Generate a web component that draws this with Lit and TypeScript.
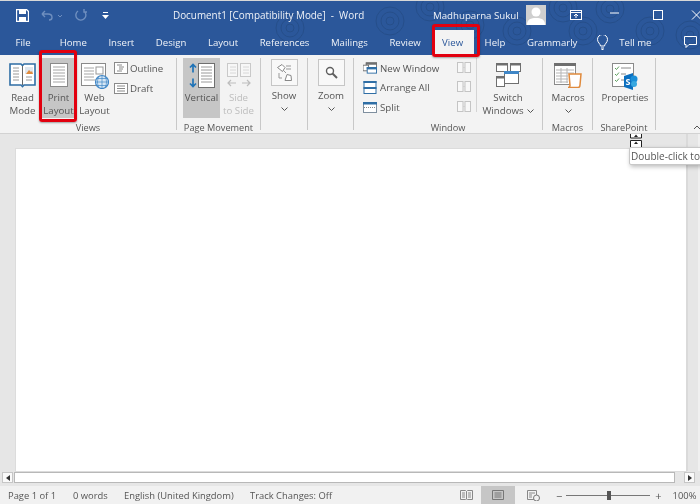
import { LitElement, html, css, svg } from 'lit'
import { customElement } from 'lit/decorators.js'

const chevron = html`<svg class="chev" width="7" height="4" viewBox="0 0 7 4"><path d="M.5.5l3 3 3-3" fill="none" stroke="#555"/></svg>`

const swirl = (x: number, y: number) => svg`
  <g fill="none" stroke="#23497f" stroke-width="1" opacity=".6">
    <circle cx=${x} cy=${y} r="4"/><circle cx=${x} cy=${y} r="9"/><circle cx=${x} cy=${y} r="14"/>
  </g>`

const icons = {
  read: html`<svg width="27" height="25" viewBox="0 0 27 25">
    <path d="M1 1h11l1.500 1.500L15 1h11v21H15l-1.500 1.500L12 22H1z" fill="#fff" stroke="#2f6ea5" stroke-width="1.600"/>
    <path d="M13.500 3v19" stroke="#666"/>
    <path d="M4 5h6M4 8h6M4 11h6M4 14h6M4 17h6M17 14h6M17 17h6" stroke="#9a9a9a"/>
    <rect x="16" y="4" width="8" height="7" fill="#dfe7ef"/><path d="M17 11l3-4 2 2 1-1 1 3z" fill="#e08a3c"/>
  </svg>`,
  print: html`<svg width="18" height="24" viewBox="0 0 18 24">
    <rect x=".5" y=".5" width="17" height="23" fill="#fff" stroke="#8a8a8a"/>
    <path d="M3 4h12M3 7h12M3 10h12M3 13h12M3 16h12M3 19h12" stroke="#a5a5a5"/>
  </svg>`,
  web: html`<svg width="28" height="26" viewBox="0 0 28 26">
    <rect x=".5" y=".5" width="24" height="22" fill="#fff" stroke="#8a8a8a"/>
    <path d="M3 5h10M3 8h10M3 11h10M3 14h10M3 17h14" stroke="#a5a5a5"/>
    <rect x="15" y="4" width="7" height="7" fill="#fff" stroke="#999"/>
    <circle cx="21" cy="19" r="6.500" fill="#d6e6f5" stroke="#3f86c6" stroke-width="1.200"/>
    <path d="M14.500 19h13M21 12.500v13M16 15.500h10M16 22.500h10M18 13.500c-2 3-2 8 0 11M24 13.500c2 3 2 8 0 11" stroke="#3f86c6" stroke-width=".7" fill="none"/>
  </svg>`,
  outline: html`<svg width="14" height="12" viewBox="0 0 14 12">
    <rect x=".5" y=".5" width="13" height="11" fill="#fff" stroke="#8a8a8a"/>
    <path d="M3 3h5M5 5h5M5 7h4M3 9h5" stroke="#8a8a8a"/>
  </svg>`,
  draft: html`<svg width="14" height="11" viewBox="0 0 14 11">
    <rect x=".5" y=".5" width="13" height="10" fill="#fff" stroke="#8a8a8a"/>
    <path d="M3 3h8M3 5.500h8M3 8h8" stroke="#8a8a8a"/>
  </svg>`,
  vertical: html`<svg width="26" height="25" viewBox="0 0 26 25">
    <path d="M4 1.500v8M1 4.500l3-3 3 3M4 15.500v8M1 20.500l3 3 3-3" fill="none" stroke="#1f73b7" stroke-width="1.700"/>
    <rect x="9.500" y=".5" width="16" height="24" fill="#fff" stroke="#6f6f6f"/>
    <path d="M12 4h11M12 7h11M12 10h11M12 13h11M12 16h11M12 19h11" stroke="#9a9a9a"/>
  </svg>`,
  side: html`<svg width="24" height="26" viewBox="0 0 24 26">
    <rect x=".5" y=".5" width="10" height="13" fill="#f7f7f7" stroke="#c9c9c9"/>
    <rect x="13.500" y=".5" width="10" height="13" fill="#f7f7f7" stroke="#c9c9c9"/>
    <path d="M3 4h6M3 7h6M3 10h6M16 4h6M16 7h6M16 10h6" stroke="#d8d8d8"/>
    <path d="M1 20h8M4 17l-3 3 3 3M15 20h8M20 17l3 3-3 3" fill="none" stroke="#bdbdbd" stroke-width="1.200"/>
  </svg>`,
  show: html`<svg width="15" height="17" viewBox="0 0 15 17">
    <path d="M.5 3.500L5 .5l3 3-2.500 4z" fill="#fff" stroke="#888"/>
    <path d="M9 2h5M9 5h5" stroke="#999"/>
    <path d="M2 9v5h3M6 6l3 3" stroke="#999" fill="none"/>
    <path d="M8 16.500l2-6 4 1 .5 5z" fill="#fff" stroke="#888"/>
  </svg>`,
  zoom: html`<svg width="13" height="13" viewBox="0 0 13 13">
    <circle cx="5" cy="5" r="3.500" fill="#fff" stroke="#5f5f5f" stroke-width="1.400"/>
    <path d="M7.500 7.500L12 12" stroke="#5f5f5f" stroke-width="2"/>
  </svg>`,
  newWin: html`<svg width="15" height="12" viewBox="0 0 15 12">
    <rect x="3.500" y=".5" width="11" height="7" fill="#fff" stroke="#6f6f6f"/><rect x="3" y="0" width="12" height="2.500" fill="#6f6f6f"/>
    <rect x="0" y="3" width="6" height="6" fill="#fff" stroke="#6f6f6f"/>
    <rect x="4.500" y="5.500" width="10" height="6" fill="#fff" stroke="#2f6ea5"/><rect x="4" y="5" width="11" height="2.500" fill="#2f6ea5"/>
  </svg>`,
  arrange: html`<svg width="13" height="13" viewBox="0 0 13 13">
    <rect x=".5" y=".5" width="12" height="12" fill="#fff" stroke="#2f6ea5"/>
    <rect x="0" y="0" width="13" height="2" fill="#2f6ea5"/><rect x="0" y="6" width="13" height="2" fill="#2f6ea5"/>
  </svg>`,
  split: html`<svg width="14" height="11" viewBox="0 0 14 11">
    <rect x=".5" y=".5" width="13" height="10" fill="#fff" stroke="#7f8f9f"/>
    <rect x="0" y="0" width="14" height="2.500" fill="#2f6ea5"/>
    <path d="M1 5.500h12" stroke="#888" stroke-dasharray="1 1"/>
  </svg>`,
  mini: html`<svg width="14" height="11" viewBox="0 0 14 11">
    <rect x=".5" y=".5" width="5.500" height="10" fill="#f8f8f8" stroke="#c4c4c4"/>
    <rect x="8" y=".5" width="5.500" height="10" fill="#f8f8f8" stroke="#c4c4c4"/>
    <path d="M6.500 5.500h1" stroke="#c4c4c4"/>
  </svg>`,
  switchWin: html`<svg width="25" height="24" viewBox="0 0 25 24">
    <rect x=".5" y=".5" width="11" height="8" fill="#fff" stroke="#6f6f6f"/><rect x="0" y="0" width="12" height="2.500" fill="#6f6f6f"/>
    <rect x="14.500" y=".5" width="10" height="8" fill="#fff" stroke="#6f6f6f"/><rect x="14" y="0" width="11" height="2.500" fill="#6f6f6f"/>
    <rect x=".5" y="13.500" width="8" height="10" fill="#fff" stroke="#6f6f6f"/><rect x="0" y="13" width="9" height="2.500" fill="#6f6f6f"/>
    <rect x="8.500" y="8.500" width="14" height="12" fill="#fff" stroke="#6f6f6f"/><rect x="8" y="8" width="15" height="3" fill="#3f86c6"/>
  </svg>`,
  macros: html`<svg width="28" height="25" viewBox="0 0 28 25">
    <rect x=".5" y=".5" width="21" height="21" fill="#fff" stroke="#8a8a8a"/>
    <rect x="0" y="0" width="22" height="3" fill="#6f6f6f"/>
    <path d="M2 7h18M2 10h18M2 13h12M2 16h12M2 19h12M7 5v15M13 5v15" stroke="#b5b5b5"/>
    <path d="M15 11h12l-1 11c0 2-1 2.500-2 2.500H14c1.500 0 2-1 2-2z" fill="#fff" stroke="#e08a3c" stroke-width="1.500"/>
  </svg>`,
  props: html`<svg width="26" height="27" viewBox="0 0 26 27">
    <rect x=".5" y=".5" width="21" height="23" fill="#fff" stroke="#8a8a8a"/>
    <path d="M3 5l1.500 1.500L7 3.500M3 11l1.500 1.500L7 9.500M3 17l1.500 1.500L7 15.500" fill="none" stroke="#5f9f5f"/>
    <path d="M9 5h10M9 11h5M9 17h3" stroke="#8a8a8a"/>
    <path d="M12 13l9-3v17l-9-3z" fill="#0b6fbf"/><circle cx="22" cy="16" r="3.500" fill="#1b8fd8"/><circle cx="22" cy="21" r="3" fill="#38a8e0"/>
    <text x="13.500" y="22" font-size="9" font-weight="700" fill="#fff" font-family="Open Sans, sans-serif">S</text>
  </svg>`,
}

@customElement('app-root')
export class AppRoot extends LitElement {
  static styles = css`
    :host {
      display: block;
      width: 700px;
      height: 504px;
      font-family: 'Open Sans', 'Noto Sans', sans-serif;
      font-size: 9.7px;
      color: #444;
    }

    .win {
      position: relative;
      width: 700px;
      height: 504px;
      overflow: hidden;
      display: flex;
      flex-direction: column;
      background: #e6e6e6;
      filter: blur(0.35px);
    }

    /* blue header */
    .head {
      position: relative;
      height: 55px;
      flex: none;
      background: #2b579a;
      border-top: 1px solid #d8d8d8;
      box-sizing: border-box;
      color: #f0f3f8;
    }
    .swirls {
      position: absolute;
      inset: 0;
    }
    .titlebar {
      position: relative;
      height: 28px;
      display: flex;
      align-items: center;
    }
    .qat {
      display: flex;
      align-items: center;
      flex: none;
      padding-left: 16px;
      width: 173px;
      box-sizing: border-box;
      gap: 12px;
    }
    .caret { margin-left: 3px; }
    .doc-title {
      width: 260px;
      flex: none;
      font-size: 9.9px;
      white-space: pre;
    }
    .user {
      width: 93px;
      flex: none;
      font-size: 9.7px;
      white-space: nowrap;
    }
    .avatar {
      width: 20px;
      height: 20px;
      background: #c9c9c9;
      flex: none;
      margin-right: 24px;
    }
    .ctrl {
      width: 12px;
      flex: none;
    }
    .ctrl.restore { margin-right: 27px; }
    .ctrl.min { margin-right: 31px; }
    .ctrl.max { margin-right: 27px; }
    .tabs {
      position: relative;
      height: 26px;
      display: flex;
      align-items: center;
      padding-left: 4.7px;
      font-size: 9.6px;
    }
    .tab {
      padding: 0 10.8px;
      white-space: nowrap;
      height: 25px;
      margin-top: 1px;
      display: flex;
      align-items: center;
    }
    .tab.file { margin-right: 7.4px; }
    .tab.on {
      background: #f3f3f3;
      color: #2b579a;
      width: 42px;
      padding: 0;
      margin: 1px 0 0 0;
      justify-content: center;
    }
    .tab.help { padding-left: 11px; }
    .tab.tell { padding-left: 0; margin-left: 9px; gap: 11px; }
    .comment { margin-left: 22px; flex: none; }

    /* ribbon */
    .ribbon {
      height: 79px;
      flex: none;
      display: flex;
      background: #f3f3f3;
      border-bottom: 1px solid #d2d2d2;
      box-sizing: border-box;
      position: relative;
    }
    .group {
      position: relative;
      display: flex;
      flex-direction: column;
      flex: none;
      box-sizing: border-box;
      margin-top: 3px;
      height: 72px;
      border-right: 1px solid #c8c8c8;
    }
    .g-views { width: 177px; }
    .g-move { width: 84px; }
    .g-show { width: 47px; }
    .g-zoom { width: 46px; }
    .g-window { width: 189px; }
    .g-macros { width: 50px; }
    .g-share { width: 63px; }
    .tools {
      height: 60px;
      flex: none;
      display: flex;
      justify-content: flex-start;
    }
    .glabel {
      text-align: center;
      font-size: 9.2px;
      line-height: 13px;
      margin-top: 3px;
      color: #555;
      white-space: nowrap;
    }
    .big {
      display: flex;
      flex-direction: column;
      align-items: center;
      box-sizing: border-box;
      flex: none;
      line-height: 13px;
      text-align: center;
      white-space: nowrap;
      color: #555;
    }
    .big .pic {
      height: 28px;
      margin-top: 5px;
      display: flex;
      align-items: flex-start;
      justify-content: center;
    }
    .big span { display: block; }
    .on-grey { background: #c6c6c6; }
    .off { color: #bdbdbd; }
    .w-read { width: 33px; margin-left: 6px; }
    .w-print { width: 35px; margin-left: 2px; }
    .w-web { width: 33px; margin-left: 2px; }
    .w-vert { width: 37px; margin-left: 6px; }
    .w-side { width: 35px; margin-left: 1px; }
    .w-switch { width: 58px; margin-left: 2px; }
    .w-macros { width: 38px; margin-left: 6px; }
    .w-props { width: 50px; margin-left: 7px; }
    .stack {
      display: flex;
      flex-direction: column;
      margin-left: 3px;
      padding-top: 4px;
      gap: 8px;
    }
    .line {
      display: flex;
      align-items: center;
      gap: 2px;
      height: 12px;
      white-space: nowrap;
      color: #555;
    }
    .line svg {
      flex: none;
    }
    .stack.win-list {
      margin-left: 9px;
      width: 94px;
      flex: none;
      gap: 7.5px;
    }
    .win-list .line {
      gap: 3px;
    }
    .win-list .line svg {
      width: 14px;
    }
    .stack.mini-list {
      margin: 0;
      gap: 8px;
      width: 19px;
      flex: none;
      border-right: 1px solid #d4d4d4;
      height: 50px;
    }
    .menu {
      display: flex;
      flex-direction: column;
      align-items: center;
      flex: none;
      width: 46px;
      line-height: 13px;
      color: #555;
    }
    .square {
      width: 27px;
      height: 27px;
      box-sizing: border-box;
      border: 1px solid #c6c6c6;
      background: #f8f8f8;
      display: flex;
      align-items: center;
      justify-content: center;
      margin: 1px 0 3px;
    }
    .chev { display: block; margin: 5px auto 0; }
    .inline-chev { display: inline-block; margin: 0 0 1px 3px; }
    .collapse {
      position: absolute;
      right: 0;
      bottom: 3px;
    }

    /* document area */
    .body {
      flex: 1;
      display: flex;
      position: relative;
      min-height: 0;
    }
    .canvas {
      flex: 1;
      padding: 15px 0 0 16px;
    }
    .page {
      height: 100%;
      background: #fff;
      box-shadow: 0 0 0 1px #dcdcdc;
    }
    .vscroll {
      width: 14px;
      flex: none;
      background: #e6e6e6;
      border-left: 2px solid #dadada;
      border-right: 2px solid #f0f0f0;
      box-sizing: border-box;
    }
    .hscroll {
      height: 15px;
      flex: none;
      display: flex;
      align-items: flex-start;
      background: #e6e6e6;
      padding: 1px 0 0 2px;
      box-sizing: border-box;
    }
    .arrow {
      width: 11px;
      height: 11px;
      flex: none;
      box-sizing: border-box;
      background: #fafafa;
      border: 1px solid #c6c6c6;
      display: flex;
      align-items: center;
      justify-content: center;
    }
    .thumb {
      width: 661px;
      height: 11px;
      flex: none;
      margin: 0 9px 0 1px;
      box-sizing: border-box;
      background: #fff;
      border: 1px solid #b8b8b8;
    }

    /* status bar */
    .status {
      height: 18px;
      flex: none;
      display: flex;
      align-items: center;
      background: #f1f1f1;
      font-size: 9.4px;
      color: #555;
      white-space: nowrap;
    }
    .st { flex: none; }
    .st-page { width: 65px; margin-left: 8px; }
    .st-words { width: 51px; }
    .st-lang { width: 126px; }
    .st-track { width: 207px; }
    .view-btn {
      width: 34px;
      height: 18px;
      flex: none;
      display: flex;
      align-items: center;
      justify-content: center;
    }
    .view-btn.first { margin-left: -6px; width: 30px; }
    .view-btn.last { width: 37px; }
    .slider {
      display: flex;
      align-items: center;
      flex: none;
      margin-left: 4px;
      color: #555;
      font-size: 11px;
    }
    .track {
      position: relative;
      width: 84px;
      height: 1px;
      background: #777;
      margin: 0 5px 0 4px;
    }
    .knob {
      position: absolute;
      left: 41px;
      top: -4px;
      width: 4px;
      height: 9px;
      background: #555;
    }
    .pct { margin-left: 11px; }

    /* things lying over the page */
    .mark {
      position: absolute;
      box-sizing: border-box;
      border: 3px solid #e2000f;
      border-radius: 3px;
      box-shadow: 0 1px 2px rgba(0, 0, 0, 0.35);
    }
    .mark.print { left: 39px; top: 50px; width: 38px; height: 72px; }
    .mark.view { left: 432px; top: 24px; width: 48px; height: 33px; }
    .ruler-btn {
      position: absolute;
      left: 630px;
      top: 134px;
      width: 12px;
      height: 13px;
    }
    .tip {
      position: absolute;
      left: 629px;
      top: 147px;
      width: 90px;
      height: 18px;
      box-sizing: border-box;
      padding-left: 1px;
      background: #fff;
      border: 1px solid #c8c8c8;
      border-radius: 2px;
      box-shadow: 1px 2px 4px rgba(0, 0, 0, 0.25);
      font-size: 10px;
      line-height: 16px;
      color: #555;
      white-space: nowrap;
    }
  `

  render() {
    return html`
      <div class="win">
        <div class="head">
          <svg class="swirls" width="700" height="54" viewBox="0 0 700 54">
            ${[[290, 27], [390, 20], [517, 30], [563, 7], [583, 30], [650, 30], [430, 6], [470, 24], [610, 8], [690, 34]].map(([x, y]) => swirl(x, y))}
          </svg>
          <div class="titlebar">
            <div class="qat">
              <svg width="13" height="13" viewBox="0 0 13 13"><path d="M.5.5h10l2 2v10H.5z" fill="none" stroke="#fff" stroke-width="1.300"/><path d="M3 1h7v4H3zM3 8h7v4.500H3z" fill="#fff"/></svg>
              <svg width="22" height="11" viewBox="0 0 22 11"><path d="M1 4h6c3 0 4 2 4 3.500S10 10 8 10M1 4l3-3M1 4l3 3" fill="none" stroke="#6f8fbf" stroke-width="1.400"/><path d="M17 5l2 2 2-2" fill="none" stroke="#6f8fbf"/></svg>
              <svg width="12" height="12" viewBox="0 0 12 12"><path d="M3 2a5 5 0 1 0 6 .2M9 0v3h3" fill="none" stroke="#6f8fbf" stroke-width="1.400"/></svg>
              <svg class="caret" width="7" height="8" viewBox="0 0 7 8"><path d="M1 1h5v1H1zM0 4h7L3.500 8z" fill="#fff"/></svg>
            </div>
            <div class="doc-title">Document1 [Compatibility Mode]  -  Word</div>
            <div class="user">Madhuparna Sukul</div>
            <svg class="avatar" viewBox="0 0 20 20"><rect width="20" height="20" fill="#cfcfcf"/><circle cx="10" cy="7" r="4.500" fill="#fff"/><path d="M1 20c0-6 4-7 9-7s9 1 9 7z" fill="#fff"/></svg>
            <svg class="ctrl restore" height="10" viewBox="0 0 12 10"><rect x=".5" y=".5" width="11" height="9" fill="none" stroke="#fff"/><path d="M1 2.500h10" stroke="#fff"/><path d="M6 8V4M4 6l2-2 2 2" stroke="#fff" fill="none"/></svg>
            <svg class="ctrl min" height="10" viewBox="0 0 12 10"><path d="M1 3h9" stroke="#fff"/></svg>
            <svg class="ctrl max" height="10" viewBox="0 0 12 10"><rect x="1.500" y=".5" width="9" height="9" fill="none" stroke="#fff"/></svg>
            <svg class="ctrl" height="10" viewBox="0 0 12 10"><path d="M1 .5l9 9M10 .5l-9 9" stroke="#fff"/></svg>
          </div>
          <div class="tabs">
            <div class="tab file">File</div>
            <div class="tab">Home</div>
            <div class="tab">Insert</div>
            <div class="tab">Design</div>
            <div class="tab">Layout</div>
            <div class="tab">References</div>
            <div class="tab">Mailings</div>
            <div class="tab">Review</div>
            <div class="tab on">View</div>
            <div class="tab help">Help</div>
            <div class="tab">Grammarly</div>
            <div class="tab tell">
              <svg width="11" height="15" viewBox="0 0 11 15"><path d="M3.500 11c0-2-3-3.500-3-6.500a5 5 0 0 1 10 0c0 3-3 4.500-3 6.500zM4 13h3M4.500 14.500h2" fill="none" stroke="#fff"/></svg>
              <span>Tell me</span>
            </div>
            <svg class="comment" width="13" height="13" viewBox="0 0 13 13"><path d="M.5.5h12v8H5l-3 3v-3H.5z" fill="none" stroke="#fff"/></svg>
          </div>
        </div>

        <div class="ribbon">
          <div class="group g-views">
            <div class="tools">
              <div class="big w-read"><div class="pic">${icons.read}</div><span>Read</span><span>Mode</span></div>
              <div class="big w-print on-grey"><div class="pic">${icons.print}</div><span>Print</span><span>Layout</span></div>
              <div class="big w-web"><div class="pic">${icons.web}</div><span>Web</span><span>Layout</span></div>
              <div class="stack">
                <div class="line">${icons.outline}Outline</div>
                <div class="line">${icons.draft}Draft</div>
              </div>
            </div>
            <div class="glabel">Views</div>
          </div>
          <div class="group g-move">
            <div class="tools">
              <div class="big w-vert on-grey"><div class="pic">${icons.vertical}</div><span>Vertical</span></div>
              <div class="big w-side off"><div class="pic">${icons.side}</div><span class="off">Side</span><span class="off">to Side</span></div>
            </div>
            <div class="glabel">Page Movement</div>
          </div>
          <div class="group g-show">
            <div class="tools">
              <div class="menu"><div class="square">${icons.show}</div><span>Show</span>${chevron}</div>
            </div>
          </div>
          <div class="group g-zoom">
            <div class="tools">
              <div class="menu"><div class="square">${icons.zoom}</div><span>Zoom</span>${chevron}</div>
            </div>
          </div>
          <div class="group g-window">
            <div class="tools">
              <div class="stack win-list">
                <div class="line">${icons.newWin}New Window</div>
                <div class="line">${icons.arrange}Arrange All</div>
                <div class="line">${icons.split}Split</div>
              </div>
              <div class="stack mini-list">
                <div class="line">${icons.mini}</div>
                <div class="line">${icons.mini}</div>
                <div class="line">${icons.mini}</div>
              </div>
              <div class="big w-switch"><div class="pic">${icons.switchWin}</div><span>Switch</span><span>Windows<svg class="inline-chev" width="7" height="4" viewBox="0 0 7 4"><path d="M.5.5l3 3 3-3" fill="none" stroke="#555"/></svg></span></div>
            </div>
            <div class="glabel">Window</div>
          </div>
          <div class="group g-macros">
            <div class="tools">
              <div class="big w-macros"><div class="pic">${icons.macros}</div><span>Macros</span>${chevron}</div>
            </div>
            <div class="glabel">Macros</div>
          </div>
          <div class="group g-share">
            <div class="tools">
              <div class="big w-props"><div class="pic">${icons.props}</div><span>Properties</span></div>
            </div>
            <div class="glabel">SharePoint</div>
          </div>
          <svg class="collapse" width="6" height="6" viewBox="0 0 6 6"><path d="M0 5l3-3 3 3" fill="none" stroke="#555"/></svg>
        </div>

        <div class="body">
          <div class="canvas"><div class="page"></div></div>
          <div class="vscroll"></div>
        </div>
        <div class="hscroll">
          <div class="arrow"><svg width="4" height="6" viewBox="0 0 4 6"><path d="M4 0v6L0 3z" fill="#333"/></svg></div>
          <div class="thumb"></div>
          <div class="arrow"><svg width="4" height="6" viewBox="0 0 4 6"><path d="M0 0v6l4-3z" fill="#333"/></svg></div>
        </div>
        <div class="status">
          <div class="st st-page">Page 1 of 1</div>
          <div class="st st-words">0 words</div>
          <div class="st st-lang">English (United Kingdom)</div>
          <div class="st st-track">Track Changes: Off</div>
          <div class="view-btn first"><svg width="13" height="10" viewBox="0 0 13 10"><path d="M.5.500h5l1 1 1-1h5v9h-5l-1-.5-1 .5h-5zM6.500 1.500v7.500M2 3h3M2 5h3M2 7h3M8 3h3M8 5h3M8 7h3" fill="none" stroke="#888"/></svg></div>
          <div class="view-btn on-grey"><svg width="12" height="10" viewBox="0 0 12 10"><path d="M.5.500h11v9H.5zM2.500 3h7M2.500 5h7M2.500 7h7" fill="none" stroke="#777"/></svg></div>
          <div class="view-btn last"><svg width="13" height="11" viewBox="0 0 13 11"><path d="M.5.500h9v9H.5zM2 3h6M2 5h3M2 7h3" fill="none" stroke="#888"/><circle cx="9.500" cy="8" r="3" fill="#f1f1f1" stroke="#777"/></svg></div>
          <div class="slider">−<div class="track"><div class="knob"></div></div>+</div>
          <div class="pct">100%</div>
        </div>

        <div class="mark print"></div>
        <div class="mark view"></div>
        <svg class="ruler-btn" viewBox="0 0 12 13"><path d="M.5 0v4h11V0M.5 13V6.500h11V13" fill="#fff" stroke="#222"/><path d="M6 .5l2 2.500H4zM6 7.500L8 10H4z" fill="#222"/></svg>
        <div class="tip">Double-click to</div>
      </div>
    `
  }
}

declare global {
  interface HTMLElementTagNameMap {
    'app-root': AppRoot
  }
}
